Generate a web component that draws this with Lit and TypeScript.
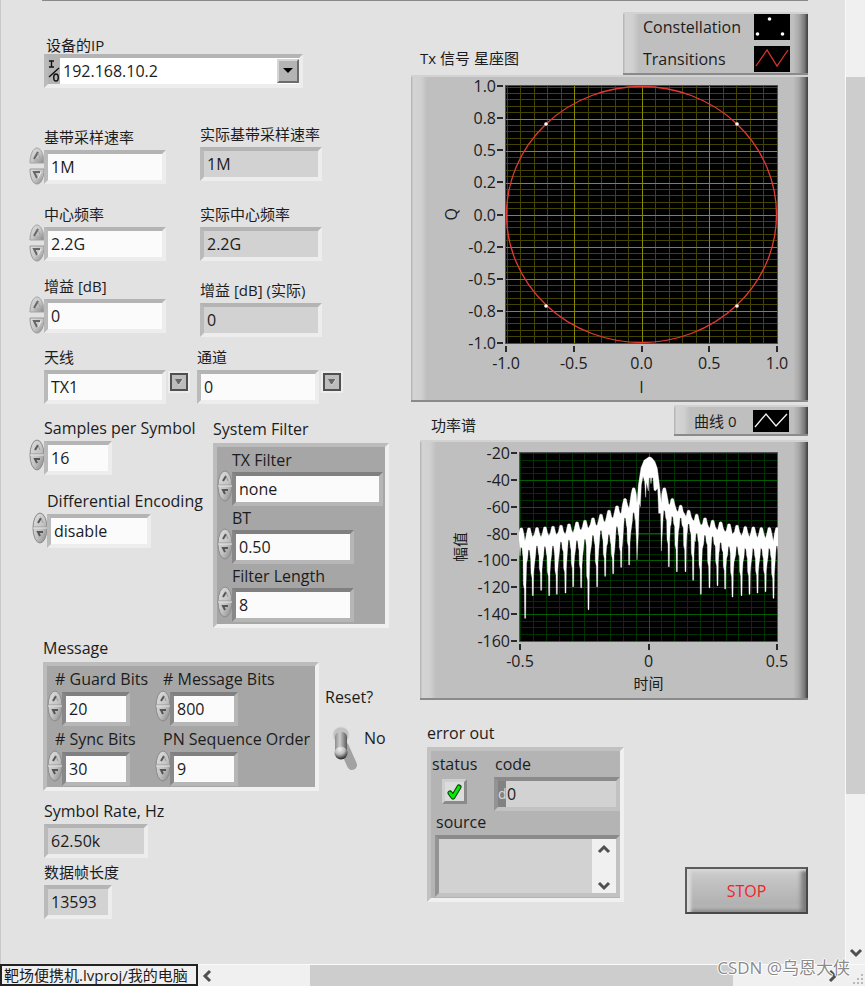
import { LitElement, html, svg, css } from "lit";
import { customElement } from "lit/decorators.js";
import { classMap } from "lit/directives/class-map.js";

type Point = [number, number];

interface FieldOptions {
  id: string;
  label: string;
  value: string;
  size?: "small" | "medium" | "wide";
  knob?: "split" | "solid";
  choices?: string[];
  readonly?: boolean;
  menu?: boolean;
}

/* Side lobes of the power spectrum: centre, crest and lower edge of the solid body. */
const LOBES: [number, number, number][] = [
  [334, 278, 355], [357, 278, 362], [381, 277, 350], [405, 275, 352], [429, 273, 350],
  [453, 270, 338], [477, 266, 332], [501, 260, 334], [525, 255, 330], [549, 248, 318],
  [573, 237, 304], [597, 225, 316], [621, 212, 292], [645, 190, 266], [671, 158, 250],
];
const LOBES_RIGHT: [number, number, number][] = [
  [763, 158, 244], [787, 190, 262], [812, 210, 266], [836, 225, 284], [860, 237, 312],
  [885, 248, 318], [908, 255, 322], [932, 260, 340], [957, 266, 352], [981, 270, 352],
  [1006, 274, 358], [1030, 275, 358], [1054, 277, 358], [1078, 277, 358], [1101, 277, 350],
];
/* Nulls between lobes: position, upper edge, tip of the downward spike. */
const NULLS: [number, number, number][] = [
  [345, 318, 550], [368, 306, 482], [393, 306, 466], [417, 302, 482], [440, 300, 478],
  [466, 298, 474], [489, 294, 455], [513, 286, 458], [535, 280, 524], [561, 272, 455],
  [585, 262, 424], [609, 250, 416], [633, 236, 397], [657, 220, 390],
];
const NULLS_RIGHT: [number, number, number][] = [
  [776, 206, 395], [800, 226, 410], [826, 240, 410], [849, 256, 436], [872, 270, 478],
  [898, 280, 458], [922, 286, 452], [945, 290, 462], [967, 298, 486], [994, 302, 482],
  [1018, 306, 478], [1042, 308, 474], [1066, 310, 470], [1090, 318, 490],
];
const MAIN_TOP: Point[] = [
  [681, 205], [685, 150], [690, 118], [693, 98], [702, 76], [712, 69], [716, 66],
  [721, 66], [726, 69], [735, 80], [742, 100], [746, 130], [750, 165], [754, 205],
];
const MAIN_BOTTOM: Point[] = [
  [754, 348], [752, 235], [746, 235], [743, 160], [736, 168], [732, 165], [729, 128],
  [725, 128], [723, 146], [721, 128], [717, 128], [715, 168], [711, 150], [709, 140],
  [707, 187], [704, 140], [699, 124], [694, 150], [691, 215], [688, 205], [685, 300],
  [681, 375], [679, 310], [676, 250],
];

function crest(lobes: [number, number, number][], nulls: [number, number, number][]): Point[] {
  return lobes.flatMap(([x, top], i) => {
    const dome: Point[] = [[x - 8, top + 20], [x - 4, top + 2], [x, top], [x + 4, top + 2], [x + 8, top + 20]];
    if (i < nulls.length) dome.push([nulls[i][0], nulls[i][1]]);
    return dome;
  });
}

function floor(lobes: [number, number, number][], nulls: [number, number, number][]): Point[] {
  return lobes.flatMap(([x, , low], i) => {
    const edge: Point[] = [[x - 4, low + 8], [x - 2, low - 18], [x + 2, low - 16], [x + 4, low + 4]];
    if (i < nulls.length) {
      const [nx, , tip] = nulls[i];
      const mid = low + (tip - low) * 0.55;
      edge.push([nx - 6, low + 12], [nx - 5, mid - 14], [nx - 2, mid], [nx - 1, tip], [nx + 2, tip], [nx + 3, mid - 10], [nx + 5, low + 30]);
    }
    return edge;
  });
}

const SPECTRUM = [
  ...crest(LOBES, NULLS),
  ...MAIN_TOP,
  ...crest(LOBES_RIGHT, NULLS_RIGHT),
  ...floor(LOBES_RIGHT, NULLS_RIGHT).reverse(),
  ...MAIN_BOTTOM,
  ...floor(LOBES, NULLS).reverse(),
].map((p) => p.join(",")).join(" ");

const steps = (n: number) => Array.from({ length: n + 1 }, (_, i) => i);

@customElement("app-root")
export class AppRoot extends LitElement {
  static styles = css`
    :host {
      display: block;
      font-family: "Open Sans", "Noto Sans CJK SC", sans-serif;
      font-size: 16px;
      color: #1c1c1c;
    }
    * { box-sizing: border-box; }
    svg { display: block; }
    button, input, select, textarea {
      font: inherit; color: inherit; margin: 0; padding: 0; border: 0;
      border-radius: 0; appearance: none; outline: none; background: none;
    }
    .window {
      display: grid;
      grid-template: minmax(0, 1fr) 22px / minmax(0, 1fr) 20px;
      min-height: 100vh;
      background: #f0f0f0;
      position: relative;
    }
    .front { background: #e2e2e2; border-left: 1px solid #c9c9c9; }
    .rule { height: 1px; background: #8a8a8a; margin: 0 37px 0 41px; }
    .panes {
      display: grid;
      grid-template-columns: 382px minmax(0, 1fr);
      padding: 11px 37px 45px 28px;
    }
    .controls { padding-top: 25px; display: flex; flex-direction: column; }

    .cjk { font-size: 15px; }
    .field { display: flex; flex-direction: column; align-items: flex-start; }
    .name { line-height: 26px; padding-left: 15px; white-space: nowrap; }
    .plain .name { padding-left: 0; }
    .entry { display: flex; align-items: flex-start; }
    .knob { width: 15px; height: 34px; overflow: visible; flex: none; }
    .box {
      width: 122px; height: 34px; padding: 0 3px;
      border: 4px solid; border-color: #b4b4b4 #ededed #ededed #bababa;
      background: #fbfbfb;
    }
    .box.small { width: 68px; }
    .box.medium { width: 104px; }
    .box.wide { width: 151px; }
    .box.locked { background: #d2d2d2; }
    .menu {
      width: 22px; height: 22px; margin: 1px 0 0 2px;
      border: 2px solid #ededed; background: #ededed;
    }
    .menu svg { width: 18px; height: 18px; }

    .device { padding-left: 15px; width: 274px; }
    .device .name { line-height: 17px; padding-left: 2px; display: block; }
    .combo {
      display: flex; height: 34px;
      border: 4px solid; border-color: #b4b4b4 #ededed #ededed #bababa;
      background: #fff;
    }
    .io { width: 12px; height: 26px; background: #b4b4b4; flex: none; }
    .combo select { flex: 1; min-width: 0; padding-left: 3px; }
    .drop {
      width: 22px; height: 24px; margin-top: 1px; background: #b4b4b4; border: 2px solid;
      border-color: #d6d6d6 #6c6c6c #6c6c6c #d6d6d6;
      display: flex; align-items: center; justify-content: center;
    }

    .pair { display: grid; grid-template-columns: 171px minmax(0, 1fr); }
    .rates { margin-top: 33px; min-height: 63px; }
    .rates > :first-child { align-self: end; }
    .centre { margin-top: 17px; }
    .gains { margin-top: 12px; min-height: 64px; }
    .gains > :last-child { align-self: end; }
    .ports { margin-top: 7px; grid-template-columns: 168px minmax(0, 1fr); }
    .ports > :first-child, .results { padding-left: 15px; }
    .coding { margin-top: 11px; grid-template-columns: 184px minmax(0, 1fr); }
    .stack { display: flex; flex-direction: column; gap: 13px; }
    .stack > :last-child { padding-left: 3px; }

    .group { display: flex; flex-direction: column; align-items: flex-start; border: 0; margin: 0; padding: 0; min-width: 0; }
    .title { line-height: 28px; white-space: nowrap; }
    .cluster {
      border: 4px solid; border-color: #bcbcbc #f0f0f0 #f0f0f0 #bcbcbc;
      background: #a6a6a6;
    }
    .cluster .box { border-color: #808080 #b6b6b6 #b6b6b6 #888; }
    .filter { width: 176px; padding: 1px 0 2px; }
    .filter .name { line-height: 24px; }
    .message { display: flex; margin-top: 6px; padding-left: 14px; gap: 6px; }
    .bits {
      width: 276px; padding-bottom: 1px;
      display: grid; grid-template-columns: 108px minmax(0, 1fr);
    }
    .bits .name { padding-left: 8px; }
    .reset { padding-top: 50px; line-height: 26px; white-space: nowrap; }
    .toggle { display: flex; align-items: flex-start; gap: 4px; padding-left: 7px; margin-top: 15px; }
    .overlay { display: grid; }
    .overlay > * { grid-area: 1 / 1; }
    .overlay > svg { pointer-events: none; }
    .results { margin-top: 7px; display: flex; flex-direction: column; gap: 1px; }

    .caption { display: flex; justify-content: space-between; align-items: flex-end; }
    .caption h2 { margin: 0; font-weight: 400; font-size: 15px; line-height: 24px; padding: 0 0 5px 9px; }
    .slab {
      background:
        linear-gradient(90deg, #b8b8b8 1px, #d4d4d4 2px, #d0d0d0 10px, #bfbfbf 16px, transparent 16px),
        linear-gradient(270deg, #484848 1px, #747474 3px, #a8a8a8 9px, #bfbfbf 15px, transparent 15px),
        #bfbfbf;
      border-top: 2px solid #d2d2d2;
      border-bottom: 2px solid #8a8a8a;
    }
    .legend { display: grid; grid-template-columns: auto 36px; column-gap: 13px; align-items: center; padding: 0 19px 0 20px; line-height: 26px; }
    .legend.double { width: 185px; height: 63px; grid-auto-rows: 26px; row-gap: 6px; }
    .legend.single { width: 134px; height: 31px; font-size: 15px; }
    .graph { display: grid; padding: 8px 30px 0 0; }
    .constellation { grid-template: 259px 56px / 60px 34px minmax(0, 1fr); }
    .spectrum { grid-template: 190px 54px / 60px 39px minmax(0, 1fr); margin: 4px 0 0 9px; padding-top: 10px; height: 260px; }
    .upright { align-self: center; justify-self: end; writing-mode: vertical-rl; text-orientation: sideways; transform: rotate(180deg); line-height: 20px; margin-right: 10px; }
    .yaxis { display: flex; flex-direction: column; justify-content: space-between; padding: 1px 2px 1px 0; margin: 0; list-style: none; }
    .yaxis li { height: 0; display: flex; align-items: center; justify-content: flex-end; gap: 1px; white-space: nowrap; }
    .yaxis li::after { content: ""; width: 6px; height: 2px; background: #2a2a2a; flex: none; }
    .plot { width: 100%; height: 100%; min-width: 0; background: #000; }
    .xaxis { grid-column: 3; margin: 0; padding: 2px 1px 0; list-style: none; display: flex; justify-content: space-between; }
    .xaxis li { width: 0; display: flex; flex-direction: column; align-items: center; line-height: 22px; }
    .xaxis li::before { content: ""; width: 2px; height: 6px; background: #2a2a2a; }
    .across { display: flex; flex-direction: column; justify-content: space-between; grid-column: 3; text-align: center; }
    .across span { line-height: 22px; padding-bottom: 2px; }
    .second { margin-top: 3px; }
    .second h2 { padding: 0 0 0 20px; line-height: 22px; }

    .status-row { display: flex; justify-content: space-between; margin-top: 19px; padding-left: 16px; }
    .error { width: 197px; background: #b4b4b4; padding-bottom: 1px; border-color: #c2c2c2 #f0f0f0 #f0f0f0 #c2c2c2; }
    .error-group { margin-bottom: 12px; }
    .flags { display: grid; grid-template-columns: 63px minmax(0, 1fr); line-height: 26px; }
    .flags label { padding-left: 1px; display: block; }
    .tick {
      width: 25px; height: 25px; margin: 2px 0 0 11px; background: #dcdcdc; border: 3px solid;
      border-color: #cfcfcf #8a8a8a #8a8a8a #cfcfcf;
    }
    .tick input { width: 19px; height: 19px; }
    .code {
      display: flex; height: 34px; line-height: 26px; background: #d2d2d2;
      border: 4px solid; border-color: #8a8a8a #c2c2c2 #c2c2c2 #939393;
    }
    .radix { width: 8px; background: #828282; color: #d8d8d8; font-size: 14px; flex: none; }
    .code input { flex: 1; min-width: 0; padding-left: 1px; }
    .source-name { display: block; line-height: 22px; padding: 0 0 2px 5px; }
    .source {
      display: flex; height: 62px; margin-left: 4px; background: #d2d2d2;
      border: 4px solid; border-color: #8a8a8a #c2c2c2 #c2c2c2 #939393;
    }
    .source textarea { flex: 1; min-width: 0; resize: none; overflow: hidden; }
    .scroller { width: 24px; display: flex; flex-direction: column; justify-content: space-between; align-items: center; background: #f0f0f0; padding: 4px 0 0; }
    .stop {
      align-self: flex-end; width: 123px; height: 47px; color: #f5222a;
      border: 2px solid; border-color: #5c5c5c #484848 #484848 #5c5c5c;
      background: linear-gradient(#d0d0d0, #c2c2c2 30%, #b2b2b2 80%, #c0c0c0);
      box-shadow: inset 4px 2px 3px #dadada, inset -5px -2px 4px #7c7c7c;
    }

    .vbar { display: flex; flex-direction: column; align-items: center; border-left: 1px solid #fafafa; }
    .vbar .before { flex: 77; }
    .vbar .thumb { flex: 717; width: 100%; background: #cdcdcd; }
    .vbar .after { flex: 166; display: flex; align-items: flex-end; padding-bottom: 4px; }
    .hbar { grid-column: 1 / -1; display: flex; align-items: stretch; border-top: 1px solid #fafafa; }
    .target { border: 2px solid #222; margin-top: -1px; width: 198px; line-height: 18px; padding: 0 2px; font-size: 15px; white-space: nowrap; overflow: hidden; flex: none; }
    .hbar .back { width: 20px; flex: none; display: flex; align-items: center; justify-content: center; }
    .hbar .lead { flex: 92; }
    .hbar .thumb { flex: 423; background: #cdcdcd; }
    .hbar .trail { flex: 90; }
    .grip { width: 12px; align-self: flex-end; flex: none; margin-left: 10px; }
    .mark {
      position: absolute; right: 15px; bottom: 6px; line-height: 24px; font-size: 17px;
      color: #8b8b8b; text-shadow: 1px 0 #fff, -1px 0 #fff, 0 1px #fff, 0 -1px #fff;
    }
  `;

  private chevron(direction: "up" | "down" | "left" | "right") {
    const paths = { up: "M2 9L7 4L12 9", down: "M2 4L7 9L12 4", left: "M9 2L4 7L9 12", right: "M4 2L9 7L4 12" };
    return html`<svg width="14" height="14" viewBox="0 0 14 14" aria-hidden="true">
      <path d=${paths[direction]} fill="none" stroke="#505050" stroke-width="3" /></svg>`;
  }

  private knob(kind: "split" | "solid") {
    const split = kind === "split";
    return html`<svg class="knob" viewBox="0 0 15 34" aria-hidden="true">
      <defs><linearGradient id="metal" x1="0" x2="1" y1="0" y2="1">
        <stop offset="0" stop-color="#e0e0e0" /><stop offset=".55" stop-color="#c4c4c4" /><stop offset="1" stop-color="#858585" />
      </linearGradient></defs>
      ${split
        ? svg`<path d="M1 13C1 5 4 -2 8 -2S15 5 15 13Z" fill="url(#metal)" stroke="#a4a4a4" />
          <path d="M1 19C1 28 4 34 8 34S15 28 15 19Z" fill="url(#metal)" stroke="#989898" />
          <path d="M5 9L9 2" fill="none" stroke="#666" stroke-width="2" /><path d="M9 3L12 10H5" fill="none" stroke="#a8a8a8" />
          <path d="M11 22H5L8 28" fill="none" stroke="#666" stroke-width="2" /><path d="M9 28L12 22" stroke="#eee" />`
        : svg`<ellipse cx="8" cy="14" rx="7" ry="15" fill="url(#metal)" stroke="#8a8a8a" stroke-width="1" />
          <path d="M1 13H15" stroke="#9a9a9a" /><path d="M1 14H15" stroke="#e6e6e6" />
          <path d="M6 9L9 4" stroke="#555" stroke-width="2" /><path d="M9 4L11 9" stroke="#999" />
          <path d="M11 18H6L8 22" fill="none" stroke="#555" stroke-width="2" />`}
    </svg>`;
  }

  private field(o: FieldOptions) {
    const box = classMap({ box: true, [o.size ?? "normal"]: true, locked: !!o.readonly });
    const cjk = /[\u4e00-\u9fff]/.test(o.label);
    return html`<div class=${classMap({ field: true, plain: !o.knob })}>
      <label class=${classMap({ name: true, cjk })} for=${o.id}>${o.label}</label>
      <div class="entry">
        ${o.knob ? this.knob(o.knob) : null}
        ${o.choices
          ? html`<select id=${o.id} class=${box}>${o.choices.map((c) => html`<option>${c}</option>`)}</select>`
          : html`<input id=${o.id} class=${box} .value=${o.value} ?readonly=${o.readonly} />`}
        ${o.menu
          ? html`<button class="menu" aria-label=${o.label}><svg viewBox="0 0 18 18">
              <rect x="1" y="1" width="16" height="16" fill="#bdbdbd" stroke="#505050" stroke-width="2" />
              <path d="M5 6H13L10 11H8Z" fill="#666" /><path d="M9 12L13 6" stroke="#ddd" /></svg></button>`
          : null}
      </div>
    </div>`;
  }

  private constellationPlot() {
    return html`<svg class="plot" viewBox="0 0 273 259" preserveAspectRatio="none" role="img" aria-label="Constellation">
      <g shape-rendering="crispEdges">
        ${steps(20).map((i) => svg`<path d="M${Math.round(1.5 + i * 13.5)} 0V259" stroke="#444400" />`)}
        ${steps(40).map((i) => svg`<path d="M0 ${Math.round(1.5 + i * 6.4)}H273" stroke="#444400" />`)}
        ${[69, 137, 204].map((x) => svg`<path d="M${x} 0V259" stroke="#8a8a00" />`)}
        ${steps(6).map((i) => svg`<path d="M0 ${Math.round(1.5 + (i + 1) * 32)}H273" stroke="#8a8a00" />`)}
      </g>
      <rect x=".5" y=".5" width="272" height="258" fill="none" stroke="#505050" />
      <ellipse cx="136.5" cy="129.5" rx="135" ry="128" fill="none" stroke="#e03a32" stroke-width="1.3" />
      ${[41, 232].flatMap((x) => [39, 221].map((y) => svg`<circle cx=${x} cy=${y} r="1.8" fill="#fff" />`))}
    </svg>`;
  }

  private spectrumPlot() {
    return html`<svg class="plot" viewBox="327 51 777 570" preserveAspectRatio="none" role="img" aria-label="Power spectrum">
      <g stroke-width="3" shape-rendering="crispEdges">
        ${steps(20).map((i) => svg`<path d="M${332 + i * 38.5} 51V621" stroke="#003200" />`)}
        ${steps(28).map((i) => svg`<path d="M327 ${56 + i * 20.1}H1104" stroke="#003200" />`)}
        <path d="M718 51V621" stroke="#006a00" />
        ${steps(5).map((i) => svg`<path d="M327 ${136 + i * 80.4}H1104" stroke="#006000" />`)}
      </g>
      <rect x="328" y="52" width="775" height="568" fill="none" stroke="#606060" stroke-width="3" />
      <polygon points=${SPECTRUM} fill="#fff" stroke="#fff" stroke-width="1" />
    </svg>`;
  }

  private controls() {
    return html`<section class="controls">
      <div class="device">
        <label class="name cjk" for="ip">设备的IP</label>
        <div class="combo">
          <svg class="io" viewBox="0 0 12 26" aria-hidden="true">
            <path d="M1 3H6M3.5 3V9M1 9H6M1 19L11 10" fill="none" stroke="#111" stroke-width="1.4" />
            <ellipse cx="8" cy="19.500" rx="2.300" ry="3.500" fill="none" stroke="#111" stroke-width="1.4" />
          </svg>
          <select id="ip"><option>192.168.10.2</option></select>
          <button class="drop" aria-label="设备的IP"><svg width="10" height="6" viewBox="0 0 10 6"><path d="M0 0H10L5 5Z" fill="#000" /></svg></button>
        </div>
      </div>
      <div class="pair rates">
        ${this.field({ id: "rate", label: "基带采样速率", value: "1M", knob: "split" })}
        ${this.field({ id: "rate-real", label: "实际基带采样速率", value: "1M", readonly: true })}
      </div>
      <div class="pair centre">
        ${this.field({ id: "freq", label: "中心频率", value: "2.2G", knob: "split" })}
        ${this.field({ id: "freq-real", label: "实际中心频率", value: "2.2G", readonly: true })}
      </div>
      <div class="pair gains">
        ${this.field({ id: "gain", label: "增益 [dB]", value: "0", knob: "split" })}
        ${this.field({ id: "gain-real", label: "增益 [dB] (实际)", value: "0", readonly: true })}
      </div>
      <div class="pair ports">
        ${this.field({ id: "antenna", label: "天线", value: "TX1", menu: true })}
        ${this.field({ id: "channel", label: "通道", value: "0", menu: true })}
      </div>
      <div class="pair coding">
        <div class="stack">
          ${this.field({ id: "samples", label: "Samples per Symbol", value: "16", knob: "solid", size: "small" })}
          ${this.field({ id: "diff", label: "Differential Encoding", value: "", choices: ["disable", "enable"], knob: "solid", size: "medium" })}
        </div>
        <div class="group" role="group" aria-labelledby="filter-title">
          <span class="title" id="filter-title">System Filter</span>
          <div class="cluster filter">
            ${this.field({ id: "tx", label: "TX Filter", value: "", choices: ["none"], knob: "solid", size: "wide" })}
            ${this.field({ id: "bt", label: "BT", value: "0.50", knob: "solid" })}
            ${this.field({ id: "length", label: "Filter Length", value: "8", knob: "solid" })}
          </div>
        </div>
      </div>
      <div class="message">
        <div class="group" role="group" aria-labelledby="message-title">
          <span class="title" id="message-title">Message</span>
          <div class="cluster bits">
            ${this.field({ id: "guard", label: "# Guard Bits", value: "20", knob: "solid", size: "small" })}
            ${this.field({ id: "bits", label: "# Message Bits", value: "800", knob: "solid", size: "small" })}
            ${this.field({ id: "sync", label: "# Sync Bits", value: "30", knob: "solid", size: "small" })}
            ${this.field({ id: "order", label: "PN Sequence Order", value: "9", knob: "solid", size: "small" })}
          </div>
        </div>
        <div class="reset">
          <label for="reset">Reset?</label>
          <div class="toggle">
            <div class="overlay">
              <input id="reset" type="checkbox" />
              <svg width="28" height="48" viewBox="0 0 28 48" aria-hidden="true">
                <defs>
                  <linearGradient id="lever"><stop offset="0" stop-color="#8c8c8c" /><stop offset=".4" stop-color="#cccccc" /><stop offset="1" stop-color="#5a5a5a" /></linearGradient>
                  <radialGradient id="bulb" cx=".4" cy=".2" r=".8"><stop offset="0" stop-color="#f0f0f0" /><stop offset=".5" stop-color="#bcbcbc" /><stop offset="1" stop-color="#202020" /></radialGradient>
                </defs>
                <path d="M12 22L20 40" stroke="#a2a2a2" stroke-width="10" stroke-linecap="round" />
                <circle cx="9" cy="10" r="8" fill="#c2c2c2" stroke="#d6d6d6" />
                <rect x="3" y="7" width="12" height="24" rx="5" fill="url(#lever)" />
                <circle cx="9" cy="28" r="6.5" fill="url(#bulb)" />
              </svg>
            </div>
            <span>No</span>
          </div>
        </div>
      </div>
      <div class="results">
        ${this.field({ id: "symbol-rate", label: "Symbol Rate, Hz", value: "62.50k", readonly: true, size: "medium" })}
        ${this.field({ id: "frame", label: "数据帧长度", value: "13593", readonly: true, size: "small" })}
      </div>
    </section>`;
  }

  private displays() {
    return html`<section>
      <header class="caption">
        <h2>Tx 信号 星座图</h2>
        <div class="slab legend double">
          <span>Constellation</span>
          <svg width="36" height="26" viewBox="0 0 36 26" aria-hidden="true"><rect width="36" height="26" fill="#000" />
            <g fill="#fff"><circle cx="15.500" cy="5" r="1.800" /><circle cx="3.500" cy="20" r="1.800" /><circle cx="28.500" cy="20" r="1.800" /></g></svg>
          <span>Transitions</span>
          <svg width="36" height="26" viewBox="0 0 36 26" aria-hidden="true"><rect width="36" height="26" fill="#000" />
            <path d="M2 20L13 4L23 20L34 4" fill="none" stroke="#d8322c" stroke-width="1.300" /></svg>
        </div>
      </header>
      <div class="slab graph constellation">
        <span class="upright">Q</span>
        <ul class="yaxis">${["1.0", "0.8", "0.5", "0.2", "0.0", "-0.2", "-0.5", "-0.8", "-1.0"].map((t) => html`<li>${t}</li>`)}</ul>
        ${this.constellationPlot()}
        <div class="across">
          <ul class="xaxis">${["-1.0", "-0.5", "0.0", "0.5", "1.0"].map((t) => html`<li>${t}</li>`)}</ul>
          <span>I</span>
        </div>
      </div>
      <header class="caption second">
        <h2>功率谱</h2>
        <div class="slab legend single">
          <span>曲线 0</span>
          <svg width="36" height="22" viewBox="0 0 36 22" aria-hidden="true"><rect width="36" height="22" fill="#000" />
            <path d="M2 17L13 4L23 16L34 4" fill="none" stroke="#f4f4f4" stroke-width="1.300" /></svg>
        </div>
      </header>
      <div class="slab graph spectrum">
        <span class="upright cjk">幅值</span>
        <ul class="yaxis">${["-20", "-40", "-60", "-80", "-100", "-120", "-140", "-160"].map((t) => html`<li>${t}</li>`)}</ul>
        ${this.spectrumPlot()}
        <div class="across">
          <ul class="xaxis">${["-0.5", "0", "0.5"].map((t) => html`<li>${t}</li>`)}</ul>
          <span class="cjk">时间</span>
        </div>
      </div>
      <div class="status-row">
        <div class="group error-group" role="group" aria-labelledby="error-title">
          <span class="title" id="error-title">error out</span>
          <div class="cluster error">
            <div class="flags">
              <div>
                <label for="status">status</label>
                <div class="tick overlay">
                  <input id="status" type="checkbox" checked />
                  <svg width="19" height="19" viewBox="0 0 19 19" aria-hidden="true">
                    <path d="M5 11L8 15L14 5" fill="none" stroke="#003c00" stroke-width="5" stroke-linecap="round" stroke-linejoin="round" />
                    <path d="M5 11L8 15L14 5" fill="none" stroke="#08e808" stroke-width="3" stroke-linecap="round" stroke-linejoin="round" /></svg>
                </div>
              </div>
              <div>
                <label for="code">code</label>
                <div class="code"><span class="radix">d</span><input id="code" .value=${"0"} readonly /></div>
              </div>
            </div>
            <label class="source-name" for="source">source</label>
            <div class="source">
              <textarea id="source" readonly></textarea>
              <div class="scroller">
                <button aria-label="Scroll up">${this.chevron("up")}</button>
                <button aria-label="Scroll down">${this.chevron("down")}</button>
              </div>
            </div>
          </div>
        </div>
        <button class="stop">STOP</button>
      </div>
    </section>`;
  }

  render() {
    return html`<div class="window">
      <main class="front">
        <div class="rule"></div>
        <div class="panes">${this.controls()}${this.displays()}</div>
      </main>
      <div class="vbar">
        <div class="before"></div>
        <div class="thumb"></div>
        <div class="after"><button aria-label="Down">${this.chevron("down")}</button></div>
      </div>
      <div class="hbar">
        <div class="target">靶场便携机.lvproj/我的电脑</div>
        <button class="back" aria-label="Left">${this.chevron("left")}</button>
        <div class="lead"></div>
        <div class="thumb"></div>
        <div class="trail"></div>
        <button class="back" aria-label="Right">${this.chevron("right")}</button>
        <svg class="grip" width="12" height="12" viewBox="0 0 12 12" aria-hidden="true">
          <path d="M8 1h2M4 5h2M8 5h2M0 9h2M4 9h2M8 9h2" stroke="#b8b8b8" stroke-width="2" /></svg>
      </div>
      <div class="mark">CSDN @乌恩大侠</div>
    </div>`;
  }
}
